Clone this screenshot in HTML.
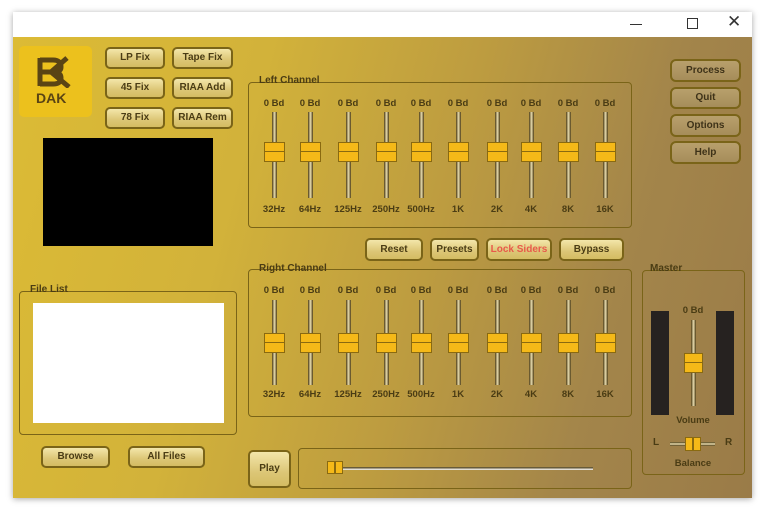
<!DOCTYPE html>
<html><head><meta charset="utf-8"><style>
*{margin:0;padding:0;box-sizing:border-box}
body{width:768px;height:516px;background:#fff;position:relative;overflow:hidden;font-family:"Liberation Sans",sans-serif;font-weight:bold;color:#4a3c14;font-size:10px}
.win{position:absolute;left:13px;top:12px;width:739px;height:486px;box-shadow:0 1px 6px rgba(0,0,0,.35)}
.title{position:absolute;left:0;top:0;width:739px;height:25px;background:#fff}
.bodyp{position:absolute;left:0;top:25px;width:739px;height:461px;background:linear-gradient(105deg,#dcbb35 0%,#d2b23a 30%,#bd9c40 55%,#a3854a 78%,#9a7b48 100%)}
.a{position:absolute}
.btn{position:absolute;border:2px solid #7a6418;border-radius:5px;background:linear-gradient(#f3e6aa,#dcc676 60%,#d4bc62);text-align:center;font-size:10px;color:#4a3c14}
.rb{position:absolute;border:2px solid #7a6418;border-radius:6px;background:linear-gradient(#b8a06c,#a68d5a);text-align:center;font-size:10px;color:#3e3218}
.grp{position:absolute;border:1.5px solid #7a6418;border-radius:4px}
.lbl{position:absolute;font-size:10px;padding:0 4px;background:transparent}
.trk{position:absolute;width:5px;background:linear-gradient(90deg,#4a3a10,#e8dcb0 50%,#4a3a10)}
.th{position:absolute;width:21px;height:20px;background:#f5b918;border:1px solid #8a6a10}
.th:after{content:"";position:absolute;left:0;right:0;top:8px;border-top:1.5px solid #8a6a10}
.t{position:absolute;width:40px;text-align:center;font-size:9.5px}
</style></head><body>
<div class="win">
<div class="title">
<div class="a" style="left:617px;top:12px;width:12px;border-top:1px solid #333"></div>
<div class="a" style="left:674px;top:6px;width:11px;height:11px;border:1px solid #333"></div>
<div class="a" style="left:714px;top:0px;font-size:17px;font-weight:normal;color:#333">✕</div>
</div>
<div class="bodyp"></div>
</div>

<!-- logo -->
<div class="a" style="left:19px;top:46px;width:73px;height:71px;background:#ecc11d;border-radius:5px"></div>
<svg class="a" style="left:37px;top:56px" width="36" height="32" viewBox="0 0 36 32"><g fill="none" stroke="#5a4414" stroke-width="5"><path d="M3 2V30"/><path d="M3 4H16Q24 4 24 11Q24 16 16 16H3"/><path d="M3 16H16Q24 16 24 22Q24 28 16 28H3"/><path d="M30 2L14 16L32 31"/></g></svg>
<div class="a" style="left:36px;top:90px;font-size:14px;color:#5a4414;font-weight:bold">DAK</div>

<div class="btn" style="left:105px;top:47px;width:60px;height:22px;line-height:18px">LP Fix</div>
<div class="btn" style="left:172px;top:47px;width:61px;height:22px;line-height:18px">Tape Fix</div>
<div class="btn" style="left:105px;top:77px;width:60px;height:22px;line-height:18px">45 Fix</div>
<div class="btn" style="left:172px;top:77px;width:61px;height:22px;line-height:18px">RIAA Add</div>
<div class="btn" style="left:105px;top:107px;width:60px;height:22px;line-height:18px">78 Fix</div>
<div class="btn" style="left:172px;top:107px;width:61px;height:22px;line-height:18px">RIAA Rem</div>

<div class="a" style="left:43px;top:138px;width:170px;height:108px;background:#000"></div>

<div class="grp" style="left:19px;top:291px;width:218px;height:144px"></div>
<div class="lbl" style="left:26px;top:284px;">File List</div>
<div class="a" style="left:33px;top:303px;width:191px;height:120px;background:#fff"></div>
<div class="btn" style="left:41px;top:446px;width:69px;height:22px;line-height:18px">Browse</div>
<div class="btn" style="left:128px;top:446px;width:77px;height:22px;line-height:18px">All Files</div>

<div class="grp" style="left:248px;top:82px;width:384px;height:146px"></div>
<div class="lbl" style="left:255px;top:75px;">Left Channel</div>
<div class="grp" style="left:248px;top:269px;width:384px;height:148px"></div>
<div class="lbl" style="left:255px;top:263px;">Right Channel</div>

<div class="btn" style="left:365px;top:238px;width:58px;height:23px;line-height:19px">Reset</div>
<div class="btn" style="left:430px;top:238px;width:49px;height:23px;line-height:19px">Presets</div>
<div class="btn" style="left:486px;top:238px;width:66px;height:23px;line-height:19px;color:#e85a4a">Lock Siders</div>
<div class="btn" style="left:559px;top:238px;width:65px;height:23px;line-height:19px">Bypass</div>

<div class="rb" style="left:670px;top:59px;width:71px;height:23px;line-height:19px">Process</div>
<div class="rb" style="left:670px;top:87px;width:71px;height:22px;line-height:18px">Quit</div>
<div class="rb" style="left:670px;top:114px;width:71px;height:23px;line-height:19px">Options</div>
<div class="rb" style="left:670px;top:141px;width:71px;height:23px;line-height:19px">Help</div>

<!-- sliders -->
<div id="s"></div>
<div class="t" style="left:254px;top:98px">0 Bd</div><div class="trk" style="left:272px;top:112px;height:86px"></div><div class="th" style="left:264px;top:142px"></div><div class="t" style="left:254px;top:204px">32Hz</div>
<div class="t" style="left:290px;top:98px">0 Bd</div><div class="trk" style="left:308px;top:112px;height:86px"></div><div class="th" style="left:300px;top:142px"></div><div class="t" style="left:290px;top:204px">64Hz</div>
<div class="t" style="left:328px;top:98px">0 Bd</div><div class="trk" style="left:346px;top:112px;height:86px"></div><div class="th" style="left:338px;top:142px"></div><div class="t" style="left:328px;top:204px">125Hz</div>
<div class="t" style="left:366px;top:98px">0 Bd</div><div class="trk" style="left:384px;top:112px;height:86px"></div><div class="th" style="left:376px;top:142px"></div><div class="t" style="left:366px;top:204px">250Hz</div>
<div class="t" style="left:401px;top:98px">0 Bd</div><div class="trk" style="left:419px;top:112px;height:86px"></div><div class="th" style="left:411px;top:142px"></div><div class="t" style="left:401px;top:204px">500Hz</div>
<div class="t" style="left:438px;top:98px">0 Bd</div><div class="trk" style="left:456px;top:112px;height:86px"></div><div class="th" style="left:448px;top:142px"></div><div class="t" style="left:438px;top:204px">1K</div>
<div class="t" style="left:477px;top:98px">0 Bd</div><div class="trk" style="left:495px;top:112px;height:86px"></div><div class="th" style="left:487px;top:142px"></div><div class="t" style="left:477px;top:204px">2K</div>
<div class="t" style="left:511px;top:98px">0 Bd</div><div class="trk" style="left:529px;top:112px;height:86px"></div><div class="th" style="left:521px;top:142px"></div><div class="t" style="left:511px;top:204px">4K</div>
<div class="t" style="left:548px;top:98px">0 Bd</div><div class="trk" style="left:566px;top:112px;height:86px"></div><div class="th" style="left:558px;top:142px"></div><div class="t" style="left:548px;top:204px">8K</div>
<div class="t" style="left:585px;top:98px">0 Bd</div><div class="trk" style="left:603px;top:112px;height:86px"></div><div class="th" style="left:595px;top:142px"></div><div class="t" style="left:585px;top:204px">16K</div>

<div class="t" style="left:254px;top:285px">0 Bd</div><div class="trk" style="left:272px;top:300px;height:85px"></div><div class="th" style="left:264px;top:333px"></div><div class="t" style="left:254px;top:389px">32Hz</div>
<div class="t" style="left:290px;top:285px">0 Bd</div><div class="trk" style="left:308px;top:300px;height:85px"></div><div class="th" style="left:300px;top:333px"></div><div class="t" style="left:290px;top:389px">64Hz</div>
<div class="t" style="left:328px;top:285px">0 Bd</div><div class="trk" style="left:346px;top:300px;height:85px"></div><div class="th" style="left:338px;top:333px"></div><div class="t" style="left:328px;top:389px">125Hz</div>
<div class="t" style="left:366px;top:285px">0 Bd</div><div class="trk" style="left:384px;top:300px;height:85px"></div><div class="th" style="left:376px;top:333px"></div><div class="t" style="left:366px;top:389px">250Hz</div>
<div class="t" style="left:401px;top:285px">0 Bd</div><div class="trk" style="left:419px;top:300px;height:85px"></div><div class="th" style="left:411px;top:333px"></div><div class="t" style="left:401px;top:389px">500Hz</div>
<div class="t" style="left:438px;top:285px">0 Bd</div><div class="trk" style="left:456px;top:300px;height:85px"></div><div class="th" style="left:448px;top:333px"></div><div class="t" style="left:438px;top:389px">1K</div>
<div class="t" style="left:477px;top:285px">0 Bd</div><div class="trk" style="left:495px;top:300px;height:85px"></div><div class="th" style="left:487px;top:333px"></div><div class="t" style="left:477px;top:389px">2K</div>
<div class="t" style="left:511px;top:285px">0 Bd</div><div class="trk" style="left:529px;top:300px;height:85px"></div><div class="th" style="left:521px;top:333px"></div><div class="t" style="left:511px;top:389px">4K</div>
<div class="t" style="left:548px;top:285px">0 Bd</div><div class="trk" style="left:566px;top:300px;height:85px"></div><div class="th" style="left:558px;top:333px"></div><div class="t" style="left:548px;top:389px">8K</div>
<div class="t" style="left:585px;top:285px">0 Bd</div><div class="trk" style="left:603px;top:300px;height:85px"></div><div class="th" style="left:595px;top:333px"></div><div class="t" style="left:585px;top:389px">16K</div>

<!-- master -->
<div class="grp" style="left:642px;top:270px;width:103px;height:205px"></div>
<div class="lbl" style="left:646px;top:263px;">Master</div>
<div class="a" style="left:651px;top:311px;width:18px;height:104px;background:#262220"></div>
<div class="a" style="left:716px;top:311px;width:18px;height:104px;background:#262220"></div>
<div class="t" style="left:673px;top:305px">0 Bd</div>
<div class="trk" style="left:691px;top:320px;height:86px"></div>
<div class="th" style="left:684px;top:353px;width:19px"></div>
<div class="t" style="left:673px;top:415px;width:40px">Volume</div>
<div class="a" style="left:653px;top:437px;font-size:10px">L</div>
<div class="a" style="left:725px;top:437px;font-size:10px">R</div>
<div class="a" style="left:670px;top:442px;width:45px;height:4px;background:linear-gradient(#4a3a10,#e8dcb0 50%,#4a3a10)"></div>
<div class="a" style="left:685px;top:437px;width:8px;height:14px;background:#f5b918;border:1px solid #8a6a10"></div>
<div class="a" style="left:693px;top:437px;width:8px;height:14px;background:#f5b918;border:1px solid #8a6a10"></div>
<div class="t" style="left:673px;top:458px">Balance</div>

<!-- play -->
<div class="btn" style="left:248px;top:450px;width:43px;height:38px;line-height:34px">Play</div>
<div class="grp" style="left:298px;top:448px;width:334px;height:41px"></div>
<div class="a" style="left:343px;top:467px;width:250px;height:3px;background:linear-gradient(#4a3a10,#fff)"></div>
<div class="a" style="left:327px;top:461px;width:8px;height:13px;background:#f5b918;border:1px solid #8a6a10"></div>
<div class="a" style="left:335px;top:461px;width:8px;height:13px;background:#f5b918;border:1px solid #8a6a10"></div>
</body></html>
